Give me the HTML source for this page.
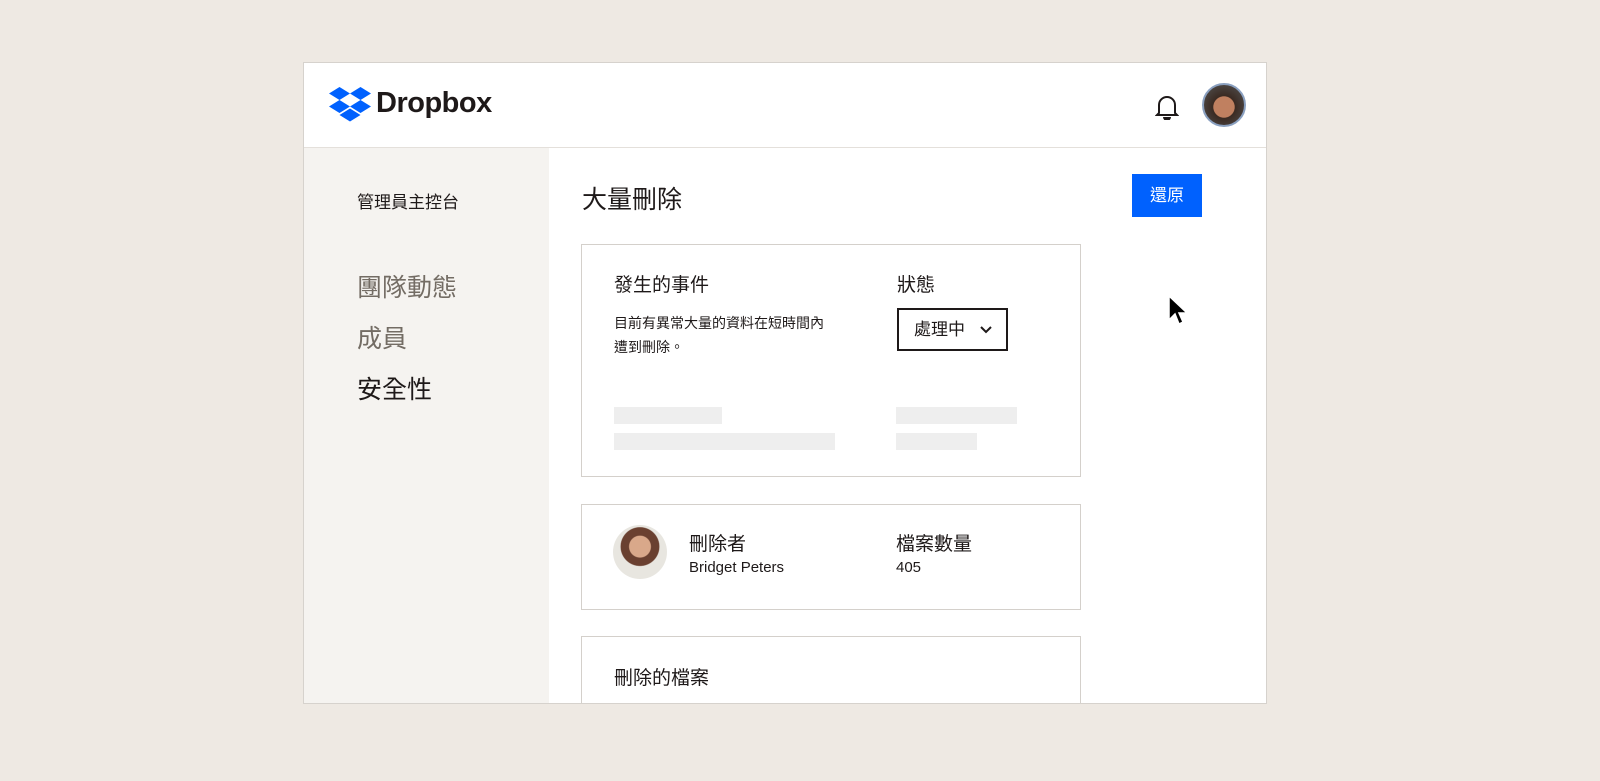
<!DOCTYPE html>
<html><head><meta charset="utf-8"><style>
*{margin:0;padding:0;box-sizing:border-box}
body{width:1600px;height:781px;background:#eee9e3;font-family:"Liberation Sans","Noto Sans CJK TC",sans-serif;color:#1e1919;position:relative;overflow:hidden}
.a{position:absolute}
.panel{left:303px;top:62px;width:964px;height:642px;background:#fff;border:1px solid #d6d2cd;overflow:hidden}
.hdr{left:0;top:0;width:962px;height:85px;border-bottom:1px solid #e4e0db}
.side{left:0;top:85px;width:245px;height:560px;background:#f5f3f0}
.card{border:1px solid #d4d0cb;background:#fff}
.bar{background:#eeeeee}
</style></head><body>
<div class="a panel">
 <div class="a hdr">
  <svg class="a" style="left:25px;top:24px" width="42" height="36" viewBox="0 0 42 36">
   <g fill="#0061fe">
    <polygon points="10.5,0 21,6.5 10.5,13 0,6.5"/>
    <polygon points="31.5,0 42,6.5 31.5,13 21,6.5"/>
    <polygon points="10.5,13 21,19.5 10.5,26 0,19.5"/>
    <polygon points="31.5,13 42,19.5 31.5,26 21,19.5"/>
    <polygon points="21,21.5 31.5,28 21,34.5 10.5,28"/>
   </g></svg>
  <div class="a" style="left:72px;top:24px;font-size:29px;font-weight:bold;letter-spacing:-0.5px">Dropbox</div>
  <svg class="a" style="left:851px;top:31px" width="24" height="26" viewBox="0 0 24 26" fill="none" stroke="#1e1919" stroke-width="2">
   <path d="M4 19 L4 11 A8 8 0 0 1 20 11 L20 19 L22 21 L2 21 Z"/><path d="M9 23 A3 3 0 0 0 15 23" fill="#1e1919"/></svg>
  <div class="a" style="left:898px;top:20px;width:44px;height:44px;border-radius:50%;background:radial-gradient(circle at 50% 55%,#c08060 0 35%,#3a2a22 37%,#555 100%);border:2px solid #8aa0c0"></div>
 </div>
 <div class="a side">
  <div class="a" style="left:53px;top:40px;font-size:17px">管理員主控台</div>
  <div class="a" style="left:53px;top:120px;font-size:25px;color:#736c64">團隊動態</div>
  <div class="a" style="left:53px;top:171px;font-size:25px;color:#736c64">成員</div>
  <div class="a" style="left:53px;top:222px;font-size:25px">安全性</div>
 </div>
 <div class="a" style="left:278px;top:117px;font-size:25px">大量刪除</div>
 <div class="a" style="left:828px;top:111px;width:70px;height:43px;background:#0061fe;color:#fff;font-size:17px;text-align:center;line-height:43px">還原</div>
 <svg class="a" style="left:863px;top:231px" width="22" height="34" viewBox="0 0 22 34"><path d="M2 2 L2 26 L8 20 L12 30 L16 28 L12 19 L20 19 Z" fill="#000" stroke="#fff" stroke-width="1.5"/></svg>
 <div class="a card" style="left:277px;top:181px;width:500px;height:233px">
  <div class="a" style="left:32px;top:25px;font-size:19px">發生的事件</div>
  <div class="a" style="left:32px;top:66px;font-size:14px;line-height:24px">目前有異常大量的資料在短時間內<br>遭到刪除。</div>
  <div class="a" style="left:315px;top:25px;font-size:19px">狀態</div>
  <div class="a" style="left:315px;top:63px;width:111px;height:43px;border:2px solid #1e1919;font-size:17px;line-height:39px;padding-left:15px">處理中</div>
  <svg class="a" style="left:398px;top:81px" width="12" height="8" viewBox="0 0 12 8"><path d="M1 1 L6 6 L11 1" fill="none" stroke="#1e1919" stroke-width="2"/></svg>
  <div class="a bar" style="left:32px;top:162px;width:108px;height:17px"></div>
  <div class="a bar" style="left:32px;top:188px;width:221px;height:17px"></div>
  <div class="a bar" style="left:314px;top:162px;width:121px;height:17px"></div>
  <div class="a bar" style="left:314px;top:188px;width:81px;height:17px"></div>
 </div>
 <div class="a card" style="left:277px;top:441px;width:500px;height:106px">
  <div class="a" style="left:31px;top:20px;width:54px;height:54px;border-radius:50%;background:radial-gradient(circle at 50% 40%,#d9a88a 0 25%,#6a4030 27% 45%,#e8e6e0 47%)"></div>
  <div class="a" style="left:107px;top:24px;font-size:19px">刪除者</div>
  <div class="a" style="left:107px;top:54px;font-size:15px">Bridget Peters</div>
  <div class="a" style="left:314px;top:24px;font-size:19px">檔案數量</div>
  <div class="a" style="left:314px;top:54px;font-size:15px">405</div>
 </div>
 <div class="a card" style="left:277px;top:573px;width:500px;height:120px">
  <div class="a" style="left:32px;top:26px;font-size:19px">刪除的檔案</div>
 </div>
</div>
</body></html>
